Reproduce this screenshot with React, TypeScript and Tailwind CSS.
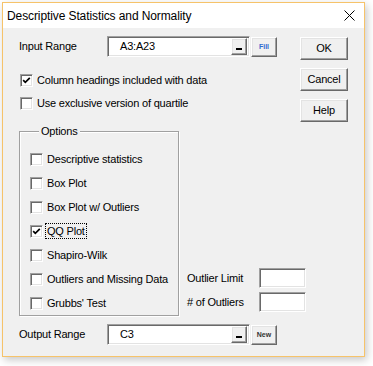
import React from 'react';

const sunken =
  'border border-t-[#a0a0a0] border-l-[#a0a0a0] border-b-white border-r-white shadow-[inset_1px_1px_0_#696969,inset_-1px_-1px_0_#e3e3e3]';
const raised =
  'border border-t-white border-l-white border-b-[#696969] border-r-[#696969] shadow-[inset_-1px_-1px_0_#a0a0a0,inset_1px_1px_0_#e3e3e3] bg-[#f0f0f0]';

const CheckBox = ({ label, checked = false, focused = false }: { label: string; checked?: boolean; focused?: boolean }) => (
  <div className="flex items-center">
    <span className={`w-[13px] h-[13px] bg-white flex items-center justify-center ${sunken}`}>
      {checked && (
        <svg width="9" height="9" viewBox="0 0 9 9">
          <polyline points="1.2,4.2 3.3,6.4 7.8,1.8" fill="none" stroke="#000" strokeWidth="1.7" />
        </svg>
      )}
    </span>
    <span
      className={`ml-[2px] px-[1px] leading-[14px] border ${focused ? 'border-dotted border-black' : 'border-transparent'}`}
    >
      {label}
    </span>
  </div>
);

const RangeInput = ({ value, extra }: { value: string; extra: React.ReactNode }) => (
  <div className="flex items-center">
    <div className={`w-[143px] h-[21px] bg-white flex items-center p-[2px] ${sunken}`}>
      <span className="pl-[10px] flex-1">{value}</span>
      <span className={`w-[16px] h-[17px] flex items-end justify-center pb-[4px] ${raised}`}>
        <span className="w-[6px] h-[2px] bg-black" />
      </span>
    </div>
    <div className={`ml-[1px] w-[26px] h-[20px] flex items-center justify-center ${raised}`}>{extra}</div>
  </div>
);

const Button = ({ children }: { children: React.ReactNode }) => (
  <div className={`w-[48px] h-[23px] flex items-center justify-center ${raised}`}>{children}</div>
);

export default function App() {
  const options = [
    { label: 'Descriptive statistics' },
    { label: 'Box Plot' },
    { label: 'Box Plot w/ Outliers' },
    { label: 'QQ Plot', checked: true, focused: true },
    { label: 'Shapiro-Wilk' },
    { label: 'Outliers and Missing Data' },
    { label: "Grubbs' Test" },
  ];

  return (
    <div className="w-[373px] h-[366px] bg-white p-[2px] text-black" style={{ fontFamily: '"Liberation Sans", Arial, sans-serif' }}>
      <div className="w-[363px] h-[355px] border border-[#f6c36a] bg-[#f0f0f0] flex flex-col shadow-[2px_3px_8px_rgba(0,0,0,0.22)]">
        {/* title bar */}
        <div className="h-[25px] bg-white flex items-center pl-[4px] pr-[9px]">
          <span className="text-[12px] leading-[14px] flex-1 tracking-[-0.1px]">Descriptive Statistics and Normality</span>
          <svg width="11" height="11" viewBox="0 0 11 11" className="mb-[1px]">
            <path d="M0.5 0.5 L10.5 10.5 M10.5 0.5 L0.5 10.5" stroke="#000" strokeWidth="1" />
          </svg>
        </div>

        <div className="flex-1 flex flex-col pt-[8px] pl-[16px] pr-[16px] text-[11px] leading-[13px] tracking-[-0.2px]">
          {/* top */}
          <div className="flex items-start">
            <div className="flex-1 flex flex-col">
              <div className="flex items-center">
                <span className="w-[88px]">Input Range</span>
                <RangeInput value="A3:A23" extra={<span className="text-[7px] font-bold text-[#2f6ad0] leading-none tracking-normal">Fill</span>} />
              </div>
              <div className="mt-[15px] ml-[1px]">
                <CheckBox label="Column headings included with data" checked />
              </div>
              <div className="mt-[7px] ml-[1px]">
                <CheckBox label="Use exclusive version of quartile" />
              </div>
            </div>
            <div className="mt-[1px] flex flex-col gap-[8px]">
              <Button>OK</Button>
              <Button>Cancel</Button>
              <Button>Help</Button>
            </div>
          </div>

          {/* middle */}
          <div className="flex items-end mt-[3px]">
            <fieldset className="w-[160px] border border-[#a0a0a0] pl-[10px] shadow-[inset_1px_1px_0_#fff,1px_1px_0_#fff]">
              <legend className="ml-[9px] px-[2px] leading-[13px] bg-[#f0f0f0]">Options</legend>
              <div className="pt-[9px] flex flex-col">
                {options.map((o) => (
                  <div key={o.label} className="h-[24px] flex items-center">
                    <CheckBox label={o.label} checked={o.checked} focused={o.focused} />
                  </div>
                ))}
              </div>
            </fieldset>
            <div className="ml-[8px] mb-[4px] flex flex-col gap-[4px]">
              <div className="flex items-center">
                <span className="w-[72px]">Outlier Limit</span>
                <div className={`w-[47px] h-[20px] bg-white ${sunken}`} />
              </div>
              <div className="flex items-center">
                <span className="w-[72px]"># of Outliers</span>
                <div className={`w-[47px] h-[20px] bg-white ${sunken}`} />
              </div>
            </div>
          </div>

          {/* bottom */}
          <div className="flex items-center mt-[8px]">
            <span className="w-[88px]">Output Range</span>
            <RangeInput value="C3" extra={<span className="text-[7px] font-bold text-[#333] leading-none tracking-normal">New</span>} />
          </div>
        </div>
      </div>
    </div>
  );
}
